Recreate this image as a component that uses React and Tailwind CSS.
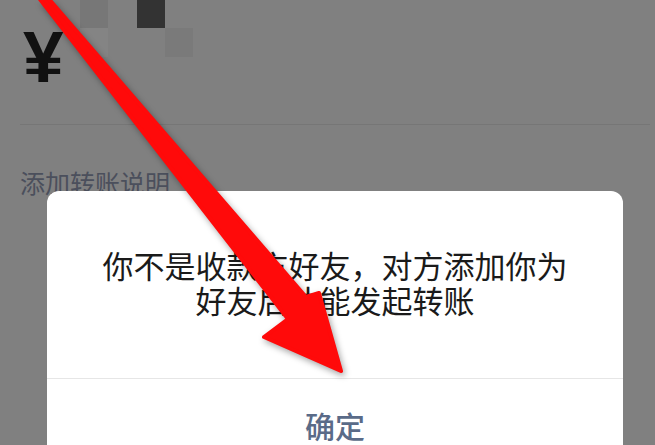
import React from 'react';

const cjk = { fontFamily: '"Noto Sans CJK SC", "Noto Sans", sans-serif' };

export default function App() {
  return (
    <div className="relative w-[655px] h-[445px] overflow-hidden bg-[#808080]" style={cjk}>
      {/* transfer page behind the mask */}
      <div className="flex flex-col">
        <div className="h-[125px] ml-[20px] mr-[5px] pl-[3px] pt-[20px] border-b border-[#767676]">
          <span
            className="block text-[73px] leading-none font-bold text-[#111]"
            style={{ fontFamily: '"Liberation Sans", Arial, sans-serif' }}
          >
            ¥
          </span>
        </div>
        <div className="pl-[20px] pt-[45px] text-[25px] leading-none text-[#4b4f5c]">添加转账说明</div>
      </div>

      {/* mosaic over the amount */}
      <div className="absolute left-[80px] top-0 grid grid-cols-[28px_29px_28px_28px] grid-rows-[28px_29px]">
        <div className="bg-[#777]" />
        <div />
        <div className="bg-[#333]" />
        <div />
        <div className="bg-[#848484]" />
        <div />
        <div />
        <div className="bg-[#7a7a7a]" />
      </div>

      {/* dialog */}
      <div className="absolute left-[47px] top-[191px] w-[576px] h-[290px] bg-white rounded-[12px] flex flex-col">
        <div className="pt-[56px] pb-[61px] text-center text-[31px] leading-[35px] text-[#1a1a1a]">
          <span className="block">你不是收款方好友，对方添加你为</span>
          <span className="block">好友后才能发起转账</span>
        </div>
        <div className="border-t border-[#e6e6e6] pt-[31px] text-center text-[30px] leading-none font-medium text-[#5a6b88]">
          确定
        </div>
      </div>

      {/* red arrow */}
      <svg
        className="absolute inset-0"
        width="655"
        height="445"
        viewBox="0 0 655 445"
        style={{ filter: 'drop-shadow(2px 3px 3px rgba(0,0,0,0.35))' }}
      >
        <polygon
          points="39,-2 48,-2 306,297 319,293 341,371 264,337 288,319"
          fill="#ff0a0a"
          stroke="#ff0a0a"
          strokeWidth="4"
          strokeLinejoin="round"
        />
      </svg>
    </div>
  );
}
